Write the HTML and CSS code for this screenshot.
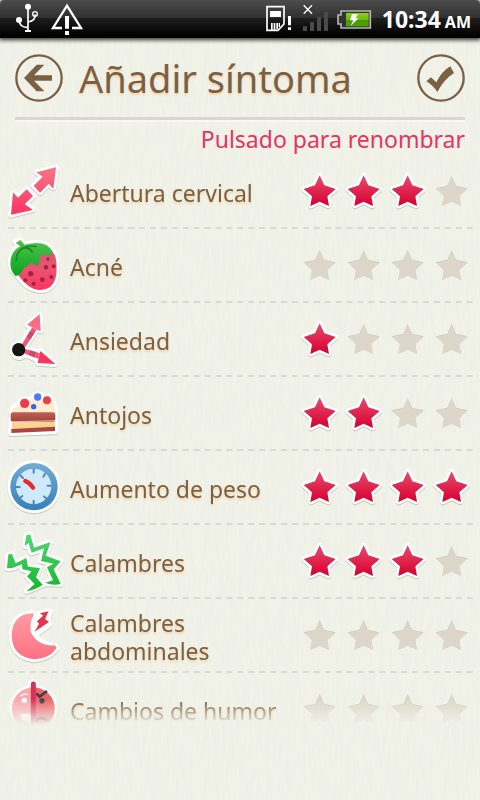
FILE: index.html
```html
<!DOCTYPE html>
<html lang="es">
    <head>
        <meta charset="UTF-8">
        <meta name="viewport" content="width=device-width"/>
        <title>Añadir síntoma</title>
        <link rel="stylesheet" href="styles.css">
    </head>
    <body>
        <!-- shared shapes and gradients -->
        <svg class="defs" width="0" height="0" aria-hidden="true">
          <defs>
            <linearGradient id="red" x1="0" y1="0" x2="0" y2="1"><stop offset="0" stop-color="#e84a6c"/><stop offset="1" stop-color="#d6002f"/></linearGradient>
            <linearGradient id="pink" x1="0" y1="0" x2="0" y2="1"><stop offset="0" stop-color="#fa7389"/><stop offset="1" stop-color="#fb3560"/></linearGradient>
            <linearGradient id="berry" x1="0" y1="0" x2="0" y2="1"><stop offset="0" stop-color="#d45a70"/><stop offset=".5" stop-color="#f0506f"/><stop offset="1" stop-color="#fb3560"/></linearGradient>
            <linearGradient id="moon" x1="0" y1="0" x2="0" y2="1"><stop offset="0" stop-color="#ff9ba3"/><stop offset="1" stop-color="#fd7182"/></linearGradient>
            <linearGradient id="leaf" x1="0" y1="0" x2="0" y2="1"><stop offset="0" stop-color="#4fc44a"/><stop offset="1" stop-color="#07a322"/></linearGradient>
            <linearGradient id="zig" x1="0" y1="0" x2="0" y2="1"><stop offset="0" stop-color="#55d674"/><stop offset="1" stop-color="#12b72d"/></linearGradient>
            <linearGradient id="ring" x1="0" y1="0" x2="0" y2="1"><stop offset="0" stop-color="#74abd4"/><stop offset="1" stop-color="#3680ba"/></linearGradient>
            <linearGradient id="choc" x1="0" y1="0" x2="0" y2="1"><stop offset="0" stop-color="#c05f58"/><stop offset="1" stop-color="#a3423a"/></linearGradient>
            <linearGradient id="batt" x1="0" y1="0" x2="0" y2="1"><stop offset="0" stop-color="#8bd020"/><stop offset=".5" stop-color="#6cb80e"/><stop offset=".5" stop-color="#4b9a00"/><stop offset="1" stop-color="#4fa303"/></linearGradient>
          </defs>
          <symbol id="on" viewBox="24 150 132 132">
            <path class="edge" d="M89 167L102 196L135 207L111 229L115 256L89 243L63 256L67 229L43 207L76 196Z"/>
            <path fill="url(#red)" d="M89 166L103 196L137 207L112 229L117 258L89 245L61 258L66 229L41 207L75 196Z"/>
          </symbol>
          <symbol id="off" viewBox="24 150 132 132">
            <path fill="#f6f6ef" d="M89 171L102 199L137 208L112 230L117 260L89 247L61 260L66 230L41 208L76 199Z"/>
            <path fill="#cfc9bc" d="M89 168L102 197L137 205L112 228L117 258L89 245L61 258L66 228L41 205L76 197Z"/>
            <path fill="#dcd7ca" d="M89 171L102 199L136 207L112 229L117 258L89 245L61 258L66 229L42 207L76 199Z"/>
          </symbol>
        </svg>

        <div class="status">
          <svg width="90" height="38" viewBox="0 0 270 114" aria-hidden="true">
            <g fill="none" stroke="#fff" stroke-width="5">
              <path d="M84 20V94M57 60Q60 84 84 82M105 43Q108 62 84 66"/>
              <circle cx="105" cy="42" r="7" stroke-width="4"/>
              <path d="M186 84H159L201 17L243 84H216" stroke-width="7"/>
            </g>
            <g fill="#fff">
              <circle cx="84" cy="20" r="9"/><circle cx="57" cy="60" r="9"/>
              <path d="M75 90H93V96H75ZM195 48H207V86H195ZM195 93H207V105H195Z"/>
            </g>
          </svg>
          <svg class="right" width="110" height="38" viewBox="75 0 330 114" aria-hidden="true">
            <path fill="none" stroke="#fff" stroke-width="5" d="M81 20H132V72L114 91H81Z"/>
            <path fill="#fff" d="M90 33H123V51H90ZM93 69H98V90H93ZM101 69H106V90H101ZM109 69H114V88H109ZM116 69H120V82H116ZM144 48H153V76H144ZM144 82H153V90H144Z"/>
            <path fill="none" stroke="#fff" stroke-width="4" d="M191 16L216 41M216 16L191 41"/>
            <path fill="#4a4a4a" d="M189 79H201V93H189ZM210 66H222V93H210ZM231 51H243V93H231ZM252 36H264V93H252Z"/>
            <path fill="#333" stroke="#b4b6b4" stroke-width="5" d="M303 33H391V84H303V72H294V45H303Z"/>
            <path fill="url(#batt)" d="M318 39H386V79H318Z"/>
            <path fill="#fff" d="M336 43H354L347 55H356L332 77L340 61H330Z"/>
          </svg>
          <span class="clock">10:34<small>AM</small></span>
        </div>

        <header>
          <button class="round" aria-label="Volver">
            <svg width="48" height="48" viewBox="45 161 144 144"><circle cx="117" cy="233" r="68"/><path d="M72 233L110 193H133L102 225H156V241H102L133 273H110Z"/></svg>
          </button>
          <h1>Añadir síntoma</h1>
          <button class="round" aria-label="Guardar">
            <svg width="48" height="48" viewBox="528 161 144 144"><circle cx="600" cy="233" r="68"/><path d="M556 243L570 231L586 246Q602 213 628 198L639 218Q608 238 589 275Q575 254 556 243Z"/></svg>
          </button>
        </header>
        <p class="hint">Pulsado para renombrar</p>

        <ul class="symptoms">
          <li>
            <svg class="icon" viewBox="0 15 210 222" aria-hidden="true">
              <path class="edge" d="M168 52L160 112L146 98L121 126L101 107L128 80L112 67ZM33 194L40 130L54 143L80 118L99 138L74 163L97 178Z"/>
              <path fill="url(#pink)" d="M168 52L160 116L146 101L120 128L101 107L128 80L109 67ZM33 194L39 127L54 143L80 118L99 138L74 163L99 180Z"/>
            </svg>
            <button class="name">Abertura cervical</button>
            <div class="stars"><button aria-label="1"><svg><use href="#on"/></svg></button><button aria-label="2"><svg><use href="#on"/></svg></button><button aria-label="3"><svg><use href="#on"/></svg></button><button aria-label="4"><svg><use href="#off"/></svg></button></div>
          </li>
          <li>
            <svg class="icon" viewBox="0 237 210 222" aria-hidden="true">
              <path class="edge" d="M47 275L60 270L72 284Q138 266 157 304Q173 318 169 372Q163 418 121 420Q83 419 53 376Q27 360 33 325Q38 297 61 289Z"/>
              <path fill="url(#berry)" d="M60 340Q100 290 157 305Q173 318 169 372Q163 418 121 420Q83 419 50 368Z"/>
              <path fill="url(#leaf)" d="M47 279L61 270L74 284Q138 267 157 304L156 312Q137 319 119 315Q119 330 117 344Q105 350 92 337Q83 350 71 353Q63 377 46 378Q26 358 33 324Q40 299 61 289Z"/>
              <path fill="none" stroke="#168a28" stroke-width="5" d="M49 334Q48 304 70 294Q90 291 98 308M72 293Q92 285 110 290"/>
              <g fill="#a02440"><circle cx="92" cy="371" r="8"/><circle cx="138" cy="352" r="7"/><circle cx="161" cy="349" r="6"/><circle cx="144" cy="327" r="5"/><circle cx="127" cy="389" r="7"/><circle cx="154" cy="381" r="6"/><circle cx="76" cy="391" r="6"/><circle cx="101" cy="401" r="6"/></g>
            </svg>
            <button class="name">Acné</button>
            <div class="stars"><button aria-label="1"><svg><use href="#off"/></svg></button><button aria-label="2"><svg><use href="#off"/></svg></button><button aria-label="3"><svg><use href="#off"/></svg></button><button aria-label="4"><svg><use href="#off"/></svg></button></div>
          </li>
          <li>
            <svg class="icon" viewBox="0 9 210 222" aria-hidden="true">
              <path class="edge" d="M119 44L122 91L110 87L77 137L80 147L117 159L121 153L164 192L114 188L111 177L75 162A20 20 0 1 1 64 132L96 84L84 75Z"/>
              <path fill="#f5567a" d="M65 134L97 82L110 89L76 141ZM73 146L120 160L115 176L71 160Z"/>
              <path fill="#c34f6d" d="M80 110L89 94L103 99L91 118ZM91 151L108 156L103 172L87 165Z"/>
              <path fill="#fa6c87" d="M119 43L122 94L81 74Z"/>
              <path fill="#fb3560" d="M121 153L166 192L113 189Z"/>
              <circle cx="56" cy="149" r="20" fill="#161616"/>
            </svg>
            <button class="name">Ansiedad</button>
            <div class="stars"><button aria-label="1"><svg><use href="#on"/></svg></button><button aria-label="2"><svg><use href="#off"/></svg></button><button aria-label="3"><svg><use href="#off"/></svg></button><button aria-label="4"><svg><use href="#off"/></svg></button></div>
          </li>
          <li>
            <svg class="icon" viewBox="0 231 210 222" aria-hidden="true">
              <path class="edge" d="M35 335Q38 320 57 313Q62 296 77 298L99 298Q101 281 116 283L134 291Q150 284 156 301Q166 315 166 337L165 394L33 399Z"/>
              <path fill="#fdecd0" d="M34 341Q34 323 62 316L95 297L156 299Q166 315 166 339L159 389L36 385Z"/>
              <path fill="#fdd38f" d="M36 362H165V381L36 387Z"/>
              <rect x="32" y="337" width="134" height="28" rx="8" fill="url(#choc)"/>
              <path fill="#a9463f" d="M34 387L165 380V393L34 399Z"/>
              <path fill="#fff" opacity=".5" d="M34 364L165 360V364L34 368Z"/>
              <circle cx="74" cy="310" r="14" fill="#ee3d49"/><circle cx="141" cy="301" r="12" fill="#ee3d49"/>
              <circle cx="113" cy="291" r="11" fill="#4b7df0"/><circle cx="101" cy="320" r="8" fill="#3166e4"/>
            </svg>
            <button class="name">Antojos</button>
            <div class="stars"><button aria-label="1"><svg><use href="#on"/></svg></button><button aria-label="2"><svg><use href="#on"/></svg></button><button aria-label="3"><svg><use href="#off"/></svg></button><button aria-label="4"><svg><use href="#off"/></svg></button></div>
          </li>
          <li>
            <svg class="icon" viewBox="0 3 210 222" aria-hidden="true">
              <circle class="edge" cx="102" cy="110" r="71"/>
              <circle cx="102" cy="110" r="71" fill="url(#ring)"/>
              <circle cx="101" cy="109" r="53" fill="#d0eafd"/>
              <path fill="none" stroke="#4889bd" stroke-width="6" stroke-linecap="round" d="M101 58V68M101 152V161M49 111H59M143 107H152M61 76L69 84M135 72L130 80M139 146L132 139M61 143L67 138"/>
              <path fill="none" stroke="#e92b2b" stroke-width="13" stroke-linecap="round" d="M76 93Q89 98 99 113"/>
            </svg>
            <button class="name">Aumento de peso</button>
            <div class="stars"><button aria-label="1"><svg><use href="#on"/></svg></button><button aria-label="2"><svg><use href="#on"/></svg></button><button aria-label="3"><svg><use href="#on"/></svg></button><button aria-label="4"><svg><use href="#on"/></svg></button></div>
          </li>
          <li>
            <svg class="icon" viewBox="0 225 210 222" aria-hidden="true">
              <path class="edge" d="M75 288L79 256L90 253L99 292L150 276L137 317L182 334L162 358L182 401L137 400L158 391L144 351L160 341L123 332L132 295L94 307L85 279ZM22 355L24 316L35 312L45 340L79 325L84 352L119 354L107 382L127 404L80 423L103 402L82 379L94 364L67 357L65 342L36 354Z"/>
              <path fill="url(#zig)" d="M74 288L79 256L91 253L102 293L152 276L137 317L182 334L161 358L182 402Q158 408 136 398L159 391L141 352L161 341L123 333L132 295L95 308L86 279ZM21 355L25 313L36 312L47 340L79 324L84 350L120 354L108 382L128 404Q108 418 80 424L104 402L81 379L95 364L67 358L66 343L36 354Z"/>
            </svg>
            <button class="name">Calambres</button>
            <div class="stars"><button aria-label="1"><svg><use href="#on"/></svg></button><button aria-label="2"><svg><use href="#on"/></svg></button><button aria-label="3"><svg><use href="#on"/></svg></button><button aria-label="4"><svg><use href="#off"/></svg></button></div>
          </li>
          <li>
            <svg class="icon" viewBox="0 -3 210 222" aria-hidden="true">
              <path class="edge" d="M98 40Q38 42 35 105Q36 172 105 178Q150 172 168 146L166 137Q120 135 106 104L148 72L141 66L150 34L117 40L112 64L104 72Z"/>
              <path fill="url(#moon)" d="M98 40Q38 42 35 105Q36 172 105 178Q150 174 168 146Q170 138 163 136Q113 139 92 95Q89 65 100 47Q104 40 98 40Z"/>
              <path fill="#e2374f" d="M120 40L146 34L135 57L147 66L104 95L117 71L111 64L129 47Z"/>
            </svg>
            <button class="name">Calambres abdominales</button>
            <div class="stars"><button aria-label="1"><svg><use href="#off"/></svg></button><button aria-label="2"><svg><use href="#off"/></svg></button><button aria-label="3"><svg><use href="#off"/></svg></button><button aria-label="4"><svg><use href="#off"/></svg></button></div>
          </li>
          <li>
            <svg class="icon" viewBox="0 219 210 222" aria-hidden="true">
              <path class="edge" d="M93 263V252Q100 240 107 252V263A64 64 0 1 1 93 263Z"/>
              <path fill="#fba9ad" d="M100 262A64 64 0 0 0 100 390Z"/>
              <path fill="#ed6468" d="M100 262A64 64 0 0 1 100 390Z"/>
              <path fill="#fff" d="M60 341H93V370Q64 368 60 341Z"/><circle cx="73" cy="301" r="8" fill="#fff"/>
              <path fill="none" stroke="#fff" stroke-width="4" d="M62 289Q70 279 84 284"/>
              <circle cx="126" cy="303" r="8" fill="#3c4144"/>
              <path fill="none" stroke="#3c4144" stroke-width="8" d="M109 280L119 290L141 273M108 363Q124 348 142 362"/>
              <path fill="none" stroke="#d8315b" stroke-width="15" stroke-linecap="round" d="M100 252V382"/>
            </svg>
            <button class="name">Cambios de humor</button>
            <div class="stars"><button aria-label="1"><svg><use href="#off"/></svg></button><button aria-label="2"><svg><use href="#off"/></svg></button><button aria-label="3"><svg><use href="#off"/></svg></button><button aria-label="4"><svg><use href="#off"/></svg></button></div>
          </li>
        </ul>
    </body>
</html>
```

FILE: styles.css
```css
* {box-sizing:border-box;}
body {
    margin: 0;
    height: 100vh;
    display: flex;
    flex-direction: column;
    overflow: hidden;
    padding-bottom: 75px;
    font-family: 'Noto Sans','Open Sans', sans-serif;
    font-size: 23px;
    color: #7b6144;
    background: #f1f2e8 url("data:image/svg+xml,%3Csvg xmlns='http://www.w3.org/2000/svg' width='240' height='240'%3E%3Cfilter id='n' x='0' y='0' width='100%25' height='100%25'%3E%3CfeTurbulence type='fractalNoise' baseFrequency='.3 .04' numOctaves='2' stitchTiles='stitch'/%3E%3CfeColorMatrix values='0 0 0 0 .82 0 0 0 0 .84 0 0 0 0 .78 1 0 0 0 -.36'/%3E%3C/filter%3E%3Crect width='240' height='240' filter='url(%23n)'/%3E%3C/svg%3E");
}
button {
    margin: 0;
    padding: 0;
    border: 0;
    background: none;
    font: inherit;
    color: inherit;
    cursor: pointer;
}
svg {display:block;}
.defs {position:absolute;}

/* phone status bar */
.status {
    flex: none;
    height: 38px;
    display: flex;
    align-items: center;
    gap: 7px;
    padding-right: 9px;
    border-radius: 4px 4px 0 0;
    color: #fff;
    background: linear-gradient(#4c4c4c, #303030 18px, #1e1e1e 18px, #000 36px);
    box-shadow: 0 1px 4px 1px rgba(0,0,0,.8);
}
.status .right {margin-left:auto;}
.clock {
    font-size: 23px;
    font-weight: bold;
    white-space: nowrap;
}
.clock small {
    margin-left: 4px;
    font-size: 16px;
}

header {
    flex: none;
    display: flex;
    align-items: center;
    gap: 16px;
    margin: 0 15px;
    padding: 16px 0 15px;
    border-bottom: 3px solid #d8d6cf;
    box-shadow: 0 2px 0 #f8f8f2;
}
h1 {
    flex: 1;
    margin: 0;
    font-size: 38px;
    line-height: 48px;
    font-weight: normal;
    white-space: nowrap;
    text-shadow: 0 2px 2px rgba(250,195,130,.6);
}
.round {flex:none;}
.round svg {overflow:visible;}
.round circle {fill:none;stroke:#7b6144;stroke-width:7;}
.round path {fill:#7b6144;}
.hint {
    flex: none;
    height: 35px;
    margin: 0 15px;
    line-height: 38px;
    text-align: right;
    color: #e63462;
}

/* the list fades out at its lower end */
.symptoms {
    flex: 1;
    min-height: 0;
    overflow: hidden;
    margin: 0;
    padding: 0;
    list-style: none;
    -webkit-mask-image: linear-gradient(#000 calc(100% - 26px), transparent);
    mask-image: linear-gradient(#000 calc(100% - 26px), transparent);
}
.symptoms li {
    position: relative;
    display: flex;
    align-items: center;
    height: 74px;
    padding-right: 6px;
}
.symptoms li::after {
    content: "";
    position: absolute;
    left: 8px;
    right: 2px;
    bottom: 0;
    height: 2px;
    background: linear-gradient(90deg, #d9dad1 6px, transparent 6px) 0 0 / 11px 2px round;
}
.icon {
    flex: none;
    width: 70px;
    height: 74px;
}
.edge {
    fill: #fff;
    stroke: #fff;
    stroke-width: 18;
    stroke-linejoin: round;
    filter: drop-shadow(0 2px 2px rgba(0,0,0,.25));
}
.name {
    flex: 1;
    padding-top: 2px;
    line-height: 28px;
    text-align: left;
    text-shadow: 0 2px 2px rgba(250,195,130,.6);
}
.stars {
    flex: none;
    display: flex;
}
.stars svg {
    width: 44px;
    height: 44px;
}
```
